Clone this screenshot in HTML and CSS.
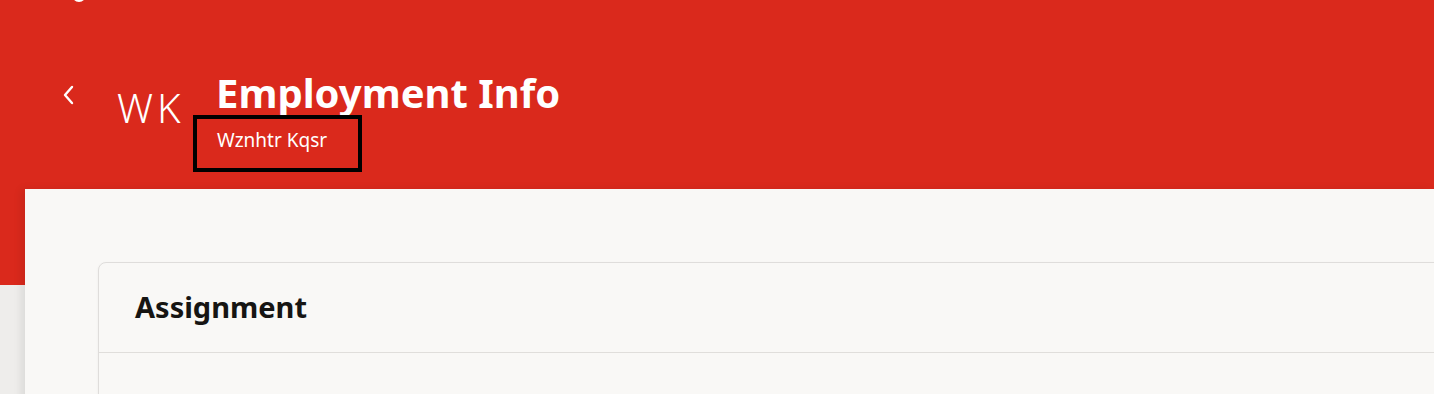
FILE: index.html
```html
<!DOCTYPE html>
<html>
<head>
<meta charset="utf-8">
<link rel="stylesheet" href="styles.css">
</head>
<body>
<header class="hero">
  <div class="logo-dot"></div>
  <div class="hero-row">
    <button class="back" aria-label="Back">
      <svg width="14" height="22" viewBox="0 0 14 22"><polyline points="11,3 4,11 11,19" fill="none" stroke="#fff" stroke-width="2.4" stroke-linecap="round" stroke-linejoin="round"/></svg>
    </button>
    <div class="avatar">WK</div>
    <div class="titles">
      <h1 class="title">Employment Info</h1>
      <div class="subtitle">Wznhtr Kqsr</div>
    </div>
  </div>
</header>
<main class="panel">
  <section class="card">
    <div class="card-head"><h2>Assignment</h2></div>
    <div class="card-row">
      <span class="cell">Business Unit</span>
      <span class="cell right">Department</span>
    </div>
  </section>
</main>
</body>
</html>
```
FILE: styles.css
```css
html, body {
  margin: 0;
  padding: 0;
  height: 100%;
  overflow: hidden;
}
body {
  background: #eeedeb;
  font-family: "Noto Sans", Lato, sans-serif;
}
.hero {
  background: #da291c;
  height: 285px;
  color: #fff;
  overflow: hidden;
}
.logo-dot {
  width: 14px;
  height: 14px;
  border-radius: 50%;
  background: #fff;
  margin: -12px 0 0 72px;
}
.hero-row {
  display: flex;
  align-items: flex-start;
  padding: 66px 0 0 56px;
}
.back {
  background: none;
  border: 0;
  padding: 0;
  width: 24px;
  height: 30px;
  display: flex;
  align-items: center;
  justify-content: center;
  margin-top: 12px;
  cursor: pointer;
}
.avatar {
  font-weight: 300;
  font-size: 40px;
  letter-spacing: 4px;
  margin: 18px 0 0 37px;
  line-height: 44px;
  width: 99px;
  flex: none;
}
.titles {
  display: flex;
  flex-direction: column;
  align-items: flex-start;
}
.title {
  margin: 0;
  font-size: 40px;
  font-weight: 700;
  line-height: 50px;
}
.subtitle {
  margin: -3px 0 0 -23px;
  padding: 9px 31px 16px 20px;
  border: 4px solid #000;
  font-size: 19px;
  line-height: 24px;
}
.panel {
  background: #f9f8f6;
  margin: -96px 0 0 25px;
  height: 400px;
  padding: 73px 0 0 73px;
  box-shadow: -4px 0 8px rgba(0,0,0,0.08);
}
.card {
  width: 1500px;
  border: 1px solid #dfdddb;
  border-radius: 8px 0 0 0;
  background: #f9f8f6;
  box-shadow: 0 1px 3px rgba(0,0,0,0.05);
}
.card-head {
  height: 89px;
  border-bottom: 1px solid #e0dedb;
  display: flex;
  align-items: center;
  padding-left: 36px;
}
.card-head h2 {
  margin: 0 0 2px;
  font-size: 29px;
  font-weight: 700;
  color: #161513;
}
.card-row {
  display: flex;
  padding: 39px 0 0 36px;
  font-size: 16px;
  color: #161513;
}
.cell {
  width: 1115px;
}
```
